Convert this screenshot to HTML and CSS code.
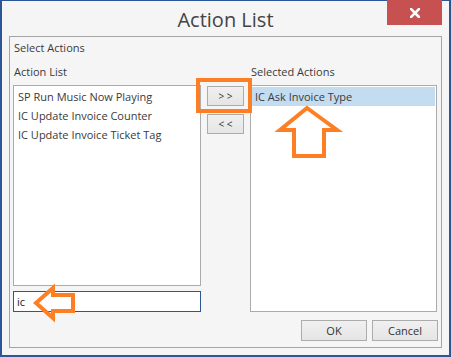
FILE: index.html
```html
<!DOCTYPE html>
<html>
<head>
<meta charset="utf-8">
<link rel="stylesheet" href="styles.css">
</head>
<body>
<div class="window">
  <div class="titlebar">
    <div class="title">Action List</div>
    <div class="close">
      <svg width="10" height="10" viewBox="0 0 10 10"><path d="M1 1 L9 9 M9 1 L1 9" stroke="#fff" stroke-width="2.6" stroke-linecap="square"/></svg>
    </div>
  </div>
  <div class="group">
    <div class="group-title">Select Actions</div>
    <div class="panels">
      <div class="label">Action List</div>
      <div></div>
      <div class="label label-right">Selected Actions</div>
      <div class="left">
        <div class="list list-left">
          <div class="item">SP Run Music Now Playing</div>
          <div class="item">IC Update Invoice Counter</div>
          <div class="item">IC Update Invoice Ticket Tag</div>
        </div>
        <div class="search">ic</div>
      </div>
      <div class="middle">
        <button class="btn btn-move">&gt; &gt;</button>
        <button class="btn btn-move">&lt; &lt;</button>
      </div>
      <div class="list list-right">
        <div class="item selected">IC Ask Invoice Type</div>
      </div>
    </div>
    <div class="footer">
      <button class="btn btn-footer">OK</button>
      <button class="btn btn-footer">Cancel</button>
    </div>
  </div>
  <svg class="overlay" width="451" height="357" viewBox="0 0 451 357">
    <rect x="198" y="80" width="52" height="31" fill="none" stroke="#fd7e23" stroke-width="4"/>
    <polygon points="307,108 337,130 324,130 324,156 294,156 294,130 280,130" fill="none" stroke="#fd7e23" stroke-width="4" stroke-linejoin="miter"/>
    <polygon points="36,303 53,288 53,295 73,295 73,311 53,311 53,318" fill="none" stroke="#fd7e23" stroke-width="4" stroke-linejoin="miter"/>
  </svg>
</div>
</body>
</html>
```
FILE: styles.css
```css
* { box-sizing: border-box; }
html, body { margin: 0; padding: 0; }
body {
  background: #f5f5f5;
  font-family: "Open Sans", "Noto Sans", sans-serif;
  font-size: 11px;
  color: #3a3a3a;
}
.window {
  position: relative;
  width: 451px;
  height: 357px;
  border: 2px solid #2b5797;
  border-top-width: 1px;
  background: #f5f5f5;
  display: flex;
  flex-direction: column;
}
.titlebar {
  height: 35px;
  flex: none;
  display: grid;
  grid-template-columns: 1fr auto 1fr;
  align-items: start;
}
.title {
  grid-column: 2;
  font-size: 20px;
  line-height: 26px;
  margin-top: 6px;
  color: #444;
}
.close {
  grid-column: 3;
  justify-self: end;
  margin-right: 7px;
  margin-top: -1px;
  width: 55px;
  height: 25px;
  background: #c75050;
  display: flex;
  align-items: center;
  justify-content: center;
}
.group {
  flex: 1;
  margin: 0 7px 7px;
  border: 1px solid #a5a5a5;
  padding: 3px 3px 0;
  display: flex;
  flex-direction: column;
}
.group-title {
  line-height: 16px;
  padding-left: 1px;
}
.panels {
  margin-top: 8px;
  display: grid;
  grid-template-columns: 188px 49px 187px;
  grid-template-rows: 16px auto;
  row-gap: 5px;
}
.label {
  line-height: 16px;
  padding-left: 1px;
}
.left {
  display: flex;
  flex-direction: column;
  gap: 5px;
}
.list {
  background: #fff;
  border: 1px solid #ababab;
  padding: 1px;
}
.list-left { height: 201px; }
.list-right { height: 227px; }
.item {
  height: 19px;
  line-height: 19px;
  padding-left: 3px;
  white-space: nowrap;
}
.item.selected {
  background: #c4dcf0;
}
.search {
  height: 21px;
  background: #fff;
  border: 1px solid #2b5797;
  line-height: 19px;
  padding-left: 3px;
  color: #222;
}
.middle {
  display: flex;
  flex-direction: column;
  align-items: flex-start;
  padding-left: 6px;
  padding-top: 1px;
  gap: 8px;
}
.btn {
  font-family: inherit;
  font-size: 11px;
  color: #333;
  background: linear-gradient(#f0f0f0, #e5e5e5);
  border: 1px solid #acacac;
  padding: 0;
  margin: 0;
}
.btn-move {
  width: 37px;
  height: 20px;
  font-size: 10px;
}
.footer {
  margin-top: 8px;
  display: flex;
  justify-content: flex-end;
  gap: 5px;
}
.btn-footer {
  width: 66px;
  height: 21px;
}
.overlay {
  position: absolute;
  left: -2px;
  top: -1px;
  pointer-events: none;
}
```
